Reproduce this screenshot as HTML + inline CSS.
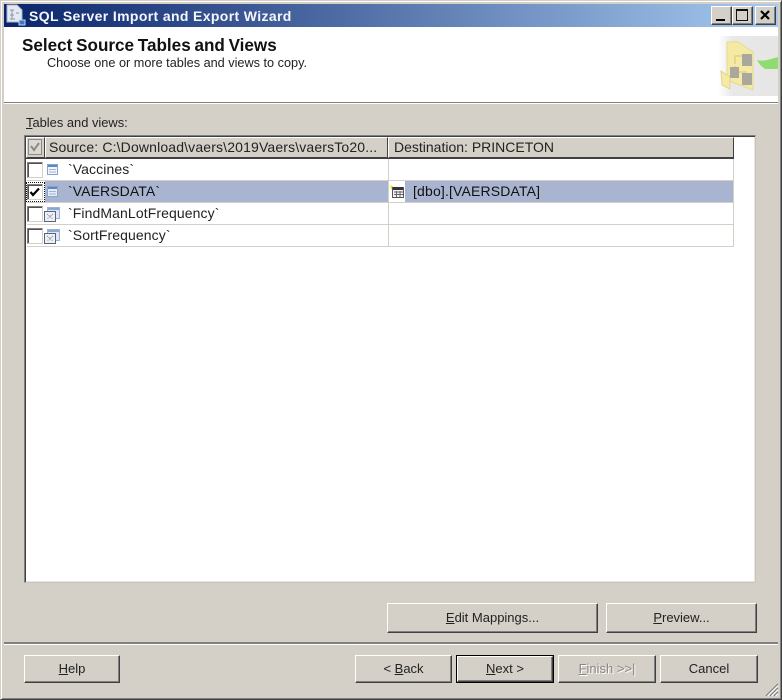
<!DOCTYPE html>
<html><head><meta charset="utf-8"><title>SQL Server Import and Export Wizard</title>
<style>
html,body{margin:0;padding:0;width:782px;height:700px;overflow:hidden;background:#d4d0c8}
body{position:relative;font-family:"Liberation Sans",sans-serif;font-size:14px;color:#111}
.a{position:absolute;box-sizing:border-box}
.t{position:absolute;white-space:nowrap;line-height:16px}
u{text-decoration:underline;text-underline-offset:1px}
.btn{position:absolute;box-sizing:border-box;background:#d4d0c8;border:1px solid;border-color:#fff #404040 #404040 #fff;box-shadow:inset -1px -1px 0 #808080;text-align:center;font-size:13px;color:#222}
.cb{position:absolute;left:27px;width:16px;height:16px;box-sizing:border-box;background:#fff;border:1px solid;border-color:#808080 #d4d0c8 #d4d0c8 #808080;box-shadow:inset 1px 1px 0 #505050}
.hl{position:absolute;left:27px;width:707px;height:1px;background:#d4d0c8}
</style></head><body>
<div class="a" style="left:0;top:0;width:782px;height:700px;border:1px solid #d4d0c8;border-right-color:#404040;border-bottom-color:#404040;box-shadow:inset 1px 1px 0 #fff,inset -1px -1px 0 #808080"></div>
<div class="a" style="left:4px;top:4px;width:774px;height:23px;background:linear-gradient(90deg,#0a246a,#a6caf0)"></div>
<svg class="a" style="left:6px;top:4px" width="20" height="22" viewBox="0 0 20 22"><path d="M1 1H11L16 6V18H1Z" fill="#e4e8f0" stroke="#aab4c8"/><path d="M4 6H8M4 11H8M4 15H9M6 6V15M10 9H13" stroke="#8a94a8" fill="none"/><rect x="13" y="16" width="6" height="5" fill="#3a78c8" stroke="#c4d4ec"/></svg>
<div class="t" style="left:29px;top:8px;color:#f4f6fb;font-weight:bold;font-size:14px;letter-spacing:.36px">SQL Server Import and Export Wizard</div>
<div class="btn" style="left:711px;top:6px;width:21px;height:19px"></div>
<div class="a" style="left:716px;top:19px;width:9px;height:2px;background:#000"></div>
<div class="btn" style="left:732px;top:6px;width:21px;height:19px"></div>
<div class="a" style="left:736px;top:9px;width:12px;height:12px;border:1px solid #111;border-top-width:2px"></div>
<div class="btn" style="left:755px;top:6px;width:21px;height:19px"></div>
<svg class="a" style="left:759px;top:9px" width="13" height="13"><path d="M2 2L10 10M10 2L2 10" stroke="#000" stroke-width="2.2"/></svg>

<div class="a" style="left:4px;top:27px;width:774px;height:75px;background:#fff"></div>
<div class="a" style="left:4px;top:102px;width:774px;height:1px;background:#808080"></div>
<div class="a" style="left:4px;top:103px;width:774px;height:1px;background:#fff"></div>
<div class="t" style="left:22px;top:37px;font-weight:bold;font-size:17.1px;line-height:18px;color:#111;word-spacing:-1px">Select Source Tables and Views</div>
<div class="t" style="left:47px;top:55px;font-size:12.7px;color:#222">Choose one or more tables and views to copy.</div>
<svg class="a" style="left:718px;top:36px" width="60" height="60" viewBox="0 0 60 60">
<defs><linearGradient id="g" x1="0" x2="1" y1="0" y2="0"><stop offset="0" stop-color="#fff"/><stop offset=".25" stop-color="#e8e8e8"/><stop offset="1" stop-color="#e6e6e6"/></linearGradient></defs>
<rect width="60" height="60" fill="url(#g)"/>
<path d="M9 6H20L35 16V54L9 44Z" fill="#f5eaa4" stroke="#e6d98e"/>
<path d="M3 35L12 41V53L4 49Z" fill="#f5eaa4" stroke="#e0d490"/>
<path d="M17 28V20H24M17 30V36H29" stroke="#d8c878" fill="none"/>
<rect x="24" y="18" width="10" height="12" fill="#aaa89c"/>
<rect x="12" y="31" width="9" height="11" fill="#aaa89c"/>
<rect x="24" y="37" width="10" height="12" fill="#aaa89c"/>
<path d="M39 24C46 26 52 23 60 21V33H47C44 31 41 28 39 24Z" fill="#8fdc70"/>
</svg>

<div class="t" style="left:26px;top:115px;font-size:12.9px;color:#222"><u>T</u>ables and views:</div>

<div class="a" style="left:24px;top:135px;width:732px;height:448px;background:#fff;border:1px solid;border-color:#808080 #c8c4bc #c8c4bc #808080;box-shadow:inset 1px 1px 0 #404040,inset -1px -1px 0 #e8e6e0"></div>
<div class="a" style="left:26px;top:137px;width:708px;height:22px;background:#d4d0c8;border-bottom:2px solid #404040"></div>
<div class="a" style="left:26px;top:137px;width:19px;height:21px;border:1px solid;border-color:#fff #404040 #404040 #fff"></div>
<div class="a" style="left:45px;top:137px;width:343px;height:21px;border:1px solid;border-color:#fff #404040 #404040 #fff"></div>
<div class="a" style="left:388px;top:137px;width:346px;height:21px;border:1px solid;border-color:#fff #404040 #404040 #fff"></div>
<div class="a" style="left:28px;top:139px;width:14px;height:16px;background:#ddd9d2;border:1px solid #8a8a8a"></div>
<svg class="a" style="left:29px;top:141px" width="12" height="12"><path d="M2 5L5 9L10 2" stroke="#8a8a8a" stroke-width="2" fill="none"/></svg>
<div class="t" style="left:49px;top:139px;color:#222;letter-spacing:.15px">Source: C:\Download\vaers\2019Vaers\vaersTo20...</div>
<div class="t" style="left:394px;top:139px;color:#222">Destination: PRINCETON</div>

<div class="a" style="left:45px;top:181px;width:689px;height:22px;background:#a9b4d0"></div>
<div class="a" style="left:388px;top:159px;width:1px;height:88px;background:#d4d0c8"></div>
<div class="a" style="left:733px;top:159px;width:1px;height:88px;background:#d4d0c8"></div>
<div class="hl" style="top:180px"></div><div class="hl" style="top:202px"></div><div class="hl" style="top:224px"></div><div class="hl" style="top:246px"></div>
<div class="a" style="left:389px;top:181px;width:16px;height:21px;background:#fff"></div>

<div class="cb" style="top:162px"></div>
<div class="cb" style="top:184px"></div>
<svg class="a" style="left:28px;top:185px" width="14" height="14"><path d="M2.500 7L5 10L11 3.500" stroke="#000" stroke-width="2.2" fill="none"/></svg>
<div class="a" style="left:26px;top:182px;width:19px;height:20px;border:1px dotted #111"></div>
<div class="cb" style="top:206px"></div>
<div class="cb" style="top:228px"></div>

<svg class="a" style="left:47px;top:164px" width="11" height="11"><rect x=".5" y=".5" width="10" height="10" fill="#f2f5fb" stroke="#88a4cc"/><rect x="1" y="1" width="9" height="2" fill="#5f86c4"/><path d="M2 5.500H9M2 8H9" stroke="#9db4d8"/></svg>
<svg class="a" style="left:47px;top:186px" width="11" height="11"><rect x=".5" y=".5" width="10" height="10" fill="#e6ebf6" stroke="#88a4cc"/><rect x="1" y="1" width="9" height="2" fill="#5f86c4"/><path d="M2 5.500H9M2 8H9" stroke="#9db4d8"/></svg>
<svg class="a" style="left:44px;top:207px" width="16" height="15"><rect x="3.500" y=".5" width="12" height="11" fill="#dfe6f4" stroke="#9db2d6"/><rect x="4" y="1" width="11" height="2" fill="#8aa8d4"/><rect x=".5" y="4.500" width="11" height="10" fill="#eef0f2" stroke="#55657f"/><path d="M3 7L9 12M9 7L3 12" stroke="#7a869c" stroke-dasharray="1 1"/></svg>
<svg class="a" style="left:44px;top:229px" width="16" height="15"><rect x="3.500" y=".5" width="12" height="11" fill="#dfe6f4" stroke="#9db2d6"/><rect x="4" y="1" width="11" height="2" fill="#8aa8d4"/><rect x=".5" y="4.500" width="11" height="10" fill="#eef0f2" stroke="#55657f"/><path d="M3 7L9 12M9 7L3 12" stroke="#7a869c" stroke-dasharray="1 1"/></svg>
<svg class="a" style="left:389px;top:184px" width="16" height="15"><path d="M1 1L5 3L4 6L2 5Z" fill="#eee020"/><rect x="3.500" y="3.500" width="11" height="10" fill="#f4f4f4" stroke="#555"/><rect x="4" y="3" width="10" height="3" fill="#334"/><path d="M5 8H14M5 10.500H14M7.500 7V13M11 7V13" stroke="#666"/></svg>

<div class="t" style="left:68px;top:161px;color:#222;letter-spacing:.1px">`Vaccines`</div>
<div class="t" style="left:68px;top:183px;color:#111;letter-spacing:.1px">`VAERSDATA`</div>
<div class="t" style="left:68px;top:205px;color:#222;letter-spacing:.1px">`FindManLotFrequency`</div>
<div class="t" style="left:68px;top:227px;color:#222;letter-spacing:.1px">`SortFrequency`</div>
<div class="t" style="left:413px;top:183px;color:#111;letter-spacing:.16px">[dbo].[VAERSDATA]</div>

<div class="btn" style="left:387px;top:603px;width:211px;height:30px;line-height:27px"><u>E</u>dit Mappings...</div>
<div class="btn" style="left:606px;top:603px;width:151px;height:30px;line-height:27px"><u>P</u>review...</div>

<div class="a" style="left:4px;top:642px;width:774px;height:2px;background:#808080"></div>
<div class="a" style="left:4px;top:644px;width:774px;height:1px;background:#fff"></div>

<div class="btn" style="left:24px;top:655px;width:96px;height:28px;line-height:26px"><u>H</u>elp</div>
<div class="btn" style="left:355px;top:655px;width:97px;height:28px;line-height:26px">&lt; <u>B</u>ack</div>
<div class="a" style="left:456px;top:655px;width:98px;height:28px;border:1px solid #000"></div>
<div class="btn" style="left:457px;top:656px;width:96px;height:26px;line-height:24px"><u>N</u>ext &gt;</div>
<div class="btn" style="left:558px;top:655px;width:98px;height:28px;line-height:26px;color:#8a8780;text-shadow:1px 1px 0 #fff"><u>F</u>inish &gt;&gt;|</div>
<div class="btn" style="left:660px;top:655px;width:98px;height:28px;line-height:26px">Cancel</div>

<svg class="a" style="left:764px;top:682px" width="15" height="15"><path d="M14 2L2 14M14 6L6 14M14 10L10 14" stroke="#808080" stroke-width="1.300"/><path d="M14 3.500L3.500 14M14 7.500L7.500 14M14 11.500L11.500 14" stroke="#fff"/></svg>
</body></html>
